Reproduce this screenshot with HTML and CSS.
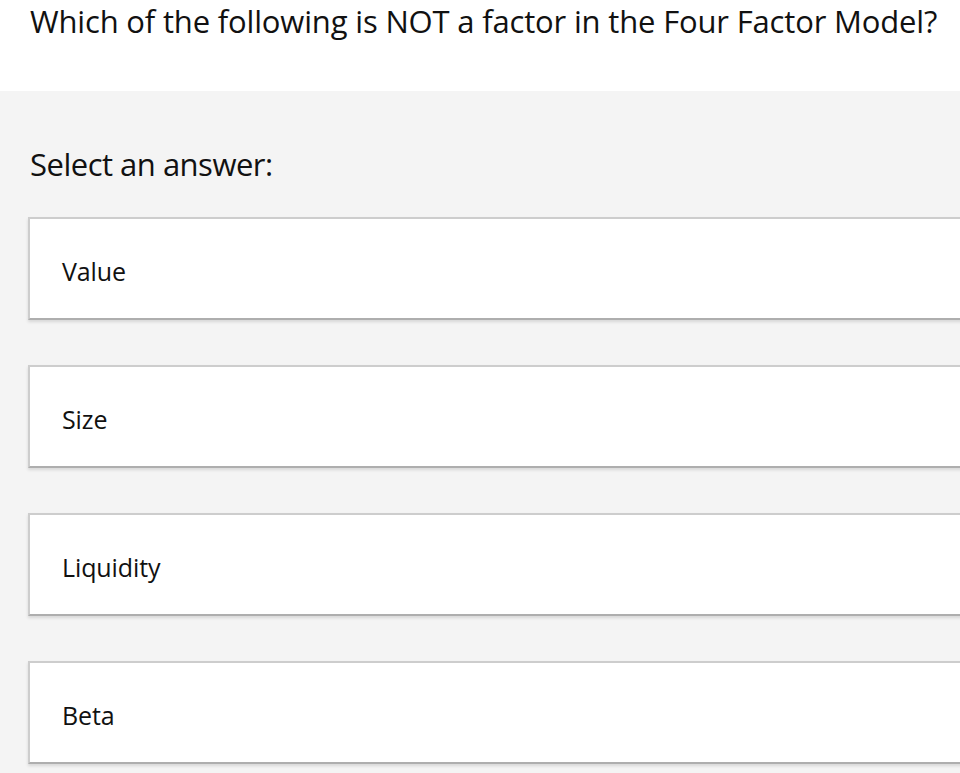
FILE: index.html
```html
<!DOCTYPE html>
<html>
<head>
<meta charset="utf-8">
<link rel="stylesheet" href="styles.css">
</head>
<body>
<div class="page">
  <header class="question">
    <h1 class="question-text">Which of the following is NOT a factor in the Four Factor Model?</h1>
  </header>
  <main class="answers">
    <h2 class="prompt">Select an answer:</h2>
    <ul class="options">
      <li class="option">Value</li>
      <li class="option">Size</li>
      <li class="option">Liquidity</li>
      <li class="option">Beta</li>
    </ul>
  </main>
</div>
</body>
</html>
```
FILE: styles.css
```css
html, body {
  margin: 0;
  padding: 0;
  background: #f4f4f4;
  overflow: hidden;
}
.page {
  font-family: "Open Sans", "Noto Sans", sans-serif;
  color: #111;
  width: 960px;
  height: 773px;
  overflow: hidden;
}
.question {
  background: #fff;
  height: 91px;
  padding-left: 30px;
  box-sizing: border-box;
}
.question-text {
  margin: 0;
  font-weight: 400;
  font-size: 31px;
  line-height: 42px;
  white-space: nowrap;
  letter-spacing: -0.17px;
}
.answers {
  padding: 48px 0 0 28px;
}
.prompt {
  margin: 0 0 0 2px;
  font-weight: 400;
  font-size: 31px;
  line-height: 50px;
  letter-spacing: -0.5px;
}
.options {
  list-style: none;
  margin: 28px -40px 0 0;
  padding: 0;
  display: flex;
  flex-direction: column;
  gap: 45px;
}
.option {
  height: 103px;
  box-sizing: border-box;
  background: #fff;
  border: 2px solid #cdcdcd;
  border-bottom-color: #aeaeae;
  box-shadow: 0 2px 3px rgba(0,0,0,0.12);
  padding: 4px 0 0 32px;
  display: flex;
  align-items: center;
  font-size: 25px;
  letter-spacing: -0.1px;
}
```
